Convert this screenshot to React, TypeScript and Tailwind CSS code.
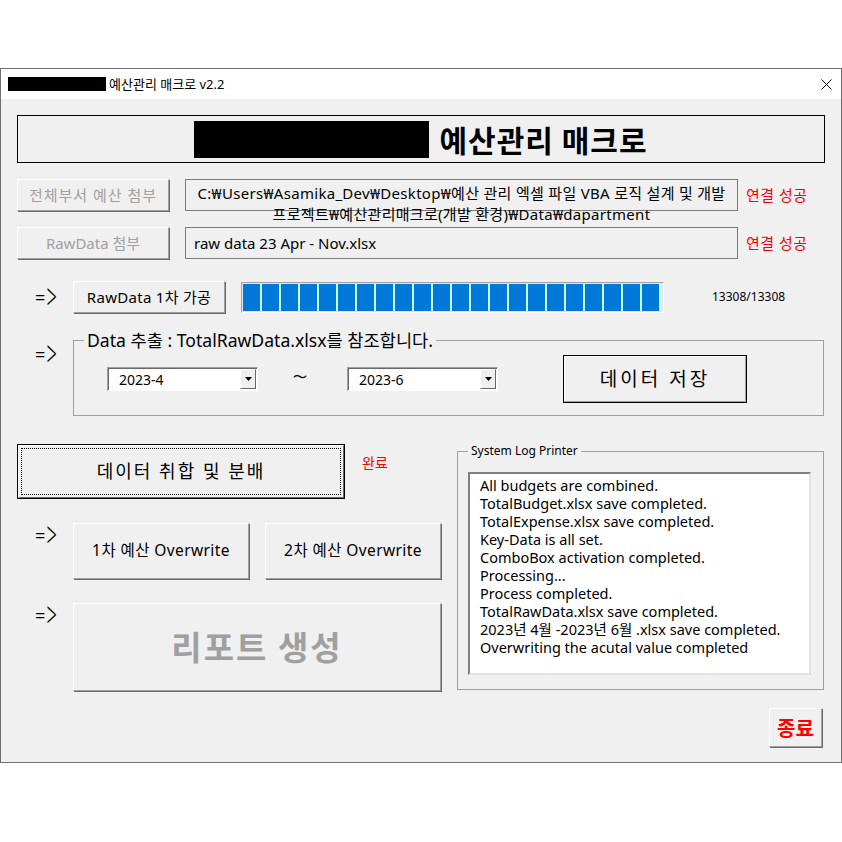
import React from "react";

const btn3d =
  "border border-t-white border-l-white border-r-[#a0a0a0] border-b-[#a0a0a0] shadow-[1px_1px_0_#696969] bg-[#f0f0f0]";

function Arrow() {
  return (
    <div className="w-[56px] shrink-0 pl-[18px] flex items-center h-[20px] text-[18px] leading-none select-none">
      <span className="inline-block">=</span>
      <span className="inline-block ml-[1px] scale-y-[1.8] scale-x-[0.9] font-light text-[20px]">&gt;</span>
    </div>
  );
}

function Combo({ value }: { value: string }) {
  return (
    <div className="w-[151px] h-[24px] bg-white border border-t-[#a0a0a0] border-l-[#a0a0a0] border-b-white border-r-white shadow-[inset_1px_1px_0_#696969] flex items-stretch">
      <div className="flex-1 pl-[11px] flex items-center text-[14px]">{value}</div>
      <div className="w-[16px] my-[1px] mr-[1px] border border-t-white border-l-white border-r-[#696969] border-b-[#696969] bg-[#f0f0f0] flex items-center justify-center">
        <svg width="7" height="4" viewBox="0 0 7 4">
          <path d="M0 0H7L3.5 4Z" fill="#000" />
        </svg>
      </div>
    </div>
  );
}

const logs = [
  "All budgets are combined.",
  "TotalBudget.xlsx save completed.",
  "TotalExpense.xlsx save completed.",
  "Key-Data is all set.",
  "ComboBox activation completed.",
  "Processing...",
  "Process completed.",
  "TotalRawData.xlsx save completed.",
  "2023년 4월 -2023년 6월 .xlsx save completed.",
  "Overwriting the acutal value completed",
];

export default function App() {
  return (
    <div className="w-[842px] h-[842px] bg-white pt-[68px] font-['Noto_Sans','Noto_Sans_CJK_KR',sans-serif] text-black">
      <div className="w-[842px] h-[695px] border border-[#707070] flex flex-col">
        {/* Title bar */}
        <div className="h-[30px] shrink-0 bg-white flex items-center pl-[7px] pr-[9px]">
          <div className="w-[98px] h-[14px] bg-black" />
          <span className="ml-[3px] text-[13px] leading-none">예산관리 매크로 v2.2</span>
          <svg className="ml-auto" width="11" height="11" viewBox="0 0 11 11">
            <path d="M0.5 0.5L10.5 10.5M10.5 0.5L0.5 10.5" stroke="#000" strokeWidth="1" />
          </svg>
        </div>

        {/* Body */}
        <div className="flex-1 bg-[#f0f0f0] px-[16px] pt-[16px]">
          {/* Header */}
          <div className="w-[808px] h-[48px] border border-black flex items-center justify-center gap-[10px]">
            <div className="w-[235px] h-[37px] bg-black" />
            <span className="text-[30px] font-bold leading-none font-['Noto_Sans_CJK_KR',sans-serif] tracking-[1px]">
              예산관리 매크로
            </span>
          </div>

          {/* Row 1 */}
          <div className="mt-[16px] flex items-start h-[32px]">
            <div className={`w-[152px] h-[32px] ${btn3d} flex items-center justify-center text-[15px] text-[#a0a0a0] tracking-[1px]`}>
              전체부서 예산 첨부
            </div>
            <div className="ml-[16px] w-[553px] h-[32px] border border-[#7a7a7a] px-[6px] pt-[3px] text-[15px] leading-[21px] text-center whitespace-normal break-keep tracking-[0.3px]">
              C:₩Users₩Asamika_Dev₩Desktop₩예산 관리 엑셀 파일 VBA 로직 설계 및 개발 프로젝트₩예산관리매크로(개발 환경)₩Data₩dapartment
            </div>
            <div className="ml-[8px] h-[32px] flex items-center text-[15px] text-[#ff0000] tracking-[0.5px]">연결 성공</div>
          </div>

          {/* Row 2 */}
          <div className="mt-[16px] flex items-start h-[32px]">
            <div className={`w-[152px] h-[32px] ${btn3d} flex items-center justify-center text-[15px] text-[#a0a0a0]`}>
              RawData 첨부
            </div>
            <div className="ml-[16px] w-[553px] h-[32px] border border-[#7a7a7a] pl-[8px] flex items-center text-[15px]">
              raw data 23 Apr - Nov.xlsx
            </div>
            <div className="ml-[8px] h-[32px] flex items-center text-[15px] text-[#ff0000] tracking-[0.5px]">연결 성공</div>
          </div>

          {/* Row 3 */}
          <div className="mt-[22px] flex items-center h-[32px]">
            <Arrow />
            <div className={`w-[152px] h-[32px] ${btn3d} flex items-center justify-center text-[15px] tracking-[0.3px]`}>
              RawData 1차 가공
            </div>
            <div className="ml-[16px] w-[423px] h-[31px] border border-t-[#a0a0a0] border-l-[#a0a0a0] border-r-white border-b-white bg-[#e6e6e6] p-[1px]">
              <div className="h-full flex gap-[2px] bg-[#c8ffff]">
                {Array.from({ length: 22 }).map((_, i) => (
                  <div key={i} className="w-[17px] h-full bg-[#0078d7]" />
                ))}
              </div>
            </div>
            <div className="ml-[48px] text-[12px]">13308/13308</div>
          </div>

          {/* Data extraction frame */}
          <div className="mt-[27px] flex items-start">
            <div className="mt-[4px]">
              <Arrow />
            </div>
            <div className="relative w-[751px] h-[76px] border border-[#a0a0a0] flex items-start">
              <div className="absolute left-[10px] top-[-12px] px-[3px] bg-[#f0f0f0] text-[17.6px] leading-[22px]">
                Data 추출 : TotalRawData.xlsx를 참조합니다.
              </div>
              <div className="ml-[33px] mt-[26px]">
                <Combo value="2023-4" />
              </div>
              <div className="w-[89px] mt-[23px] h-[24px] flex items-center justify-center text-[26px] leading-none font-light pr-[5px]">~</div>
              <div className="mt-[26px]">
                <Combo value="2023-6" />
              </div>
              <div className="ml-[65px] mt-[14px] w-[184px] h-[48px] border border-black">
                <div className={`w-full h-full ${btn3d} shadow-none border-r-[#696969] border-b-[#696969] flex items-center justify-center text-[19px] tracking-[3px]`}>
                  데이터 저장
                </div>
              </div>
            </div>
          </div>

          {/* Lower section */}
          <div className="mt-[28px] flex items-start">
            <div className="w-[424px] shrink-0">
              <div className="flex items-start">
                <div className="w-[328px] h-[55px] border border-black">
                  <div className="w-full h-full border border-t-white border-l-white border-r-[#696969] border-b-[#696969] p-[2px]">
                    <div className="w-full h-full border border-dotted border-black flex items-center justify-center text-[18px] tracking-[2px]">
                      데이터 취합 및 분배
                    </div>
                  </div>
                </div>
                <div className="ml-[17px] mt-[8px] text-[14px] text-[#ff0000]">완료</div>
              </div>

              <div className="mt-[24px] flex items-start">
                <div className="mt-[2px]">
                  <Arrow />
                </div>
                <div className={`w-[176px] h-[56px] ${btn3d} flex items-center justify-center text-[15.5px] tracking-[0.4px]`}>
                  1차 예산 Overwrite
                </div>
                <div className={`ml-[16px] w-[176px] h-[56px] ${btn3d} flex items-center justify-center text-[15.5px] tracking-[0.4px]`}>
                  2차 예산 Overwrite
                </div>
              </div>

              <div className="mt-[24px] flex items-start">
                <div className="mt-[2px]">
                  <Arrow />
                </div>
                <div className={`w-[368px] h-[88px] ${btn3d} flex items-center justify-center text-[33px] font-bold text-[#a0a0a0] tracking-[2px] font-['Noto_Sans_CJK_KR',sans-serif]`}>
                  리포트 생성
                </div>
              </div>
            </div>

            {/* Log frame */}
            <div className="ml-[16px] mt-[7px] relative w-[367px] h-[239px] border border-[#a0a0a0]">
              <div className="absolute left-[10px] top-[-10px] px-[3px] bg-[#f0f0f0] text-[12px] leading-[18px]">
                System Log Printer
              </div>
              <div className="ml-[10px] mt-[20px] w-[343px] h-[203px] bg-white border-2 border-t-[#808080] border-l-[#808080] border-r-[#e3e3e3] border-b-[#e3e3e3] pl-[10px] pt-[2px]">
                {logs.map((l, i) => (
                  <div key={i} className="text-[14.5px] leading-[18px] whitespace-nowrap">
                    {l}
                  </div>
                ))}
              </div>
            </div>
          </div>

          {/* Close button row */}
          <div className="mt-[17px] flex justify-end">
            <div className={`mr-[3px] w-[53px] h-[39px] ${btn3d} flex items-center justify-center text-[20px] font-bold text-[#ff0000] font-['Noto_Sans_CJK_KR',sans-serif]`}>
              종료
            </div>
          </div>
        </div>
      </div>
    </div>
  );
}
